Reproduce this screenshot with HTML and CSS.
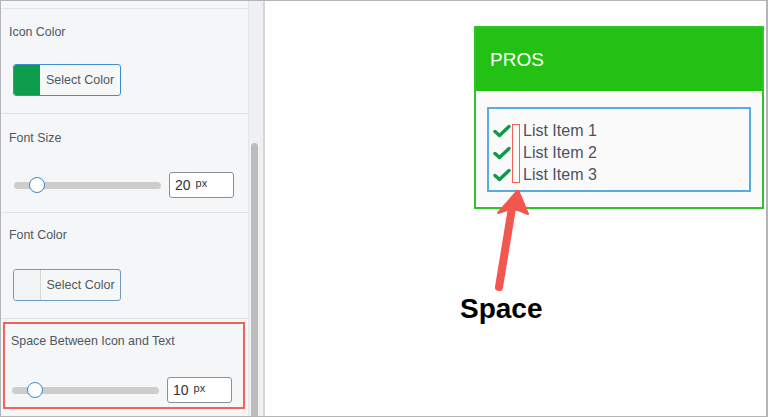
FILE: index.html
```html
<!DOCTYPE html>
<html lang="en">
<head>
    <meta charset="UTF-8">
    <meta name="viewport" content="width=device-width, initial-scale=1.0">
    <title>Pros List Settings</title>
    <link rel="stylesheet" href="styles.css">
</head>
<body>
    <div class="frame">
        <div class="sidebar">
            <div class="panel">
                <div class="section section-top"></div>

                <div class="section section-first">
                    <div class="label">Icon Color</div>
                    <button class="color-btn">
                        <span class="swatch swatch-green"></span>
                        <span class="btn-text">Select Color</span>
                    </button>
                </div>

                <div class="section section-range">
                    <div class="label">Font Size</div>
                    <div class="range-row">
                        <div class="track"><span class="thumb"></span></div>
                        <div class="num-box"><span>20</span><span class="unit">px</span></div>
                    </div>
                </div>

                <div class="section section-third">
                    <div class="label">Font Color</div>
                    <button class="color-btn color-btn-plain">
                        <span class="swatch"></span>
                        <span class="btn-text">Select Color</span>
                    </button>
                </div>

                <div class="section section-last">
                    <div class="highlight">
                        <div class="label">Space Between Icon and Text</div>
                        <div class="range-row">
                            <div class="track"><span class="thumb"></span></div>
                            <div class="num-box"><span>10</span><span class="unit">px</span></div>
                        </div>
                    </div>
                </div>
            </div>
            <div class="scrollbar"><span class="scroll-thumb"></span></div>
        </div>

        <div class="preview">
            <div class="pros-box">
                <div class="pros-head">PROS</div>
                <div class="pros-body">
                    <ul class="pros-list">
                        <li>
                            <svg class="check" viewBox="0 0 18 14"><path d="M2 7.5 L6.5 11.5 L16 2.5" /></svg>
                            List Item 1
                        </li>
                        <li>
                            <svg class="check" viewBox="0 0 18 14"><path d="M2 7.5 L6.5 11.5 L16 2.5" /></svg>
                            List Item 2
                        </li>
                        <li>
                            <svg class="check" viewBox="0 0 18 14"><path d="M2 7.5 L6.5 11.5 L16 2.5" /></svg>
                            List Item 3
                        </li>
                    </ul>
                    <span class="gap-mark"></span>
                </div>
            </div>
        </div>

        <!-- annotation -->
        <svg class="arrow" viewBox="0 0 60 110" width="60" height="110">
            <path class="arrow-shaft" d="M31 18 L18 97" />
            <path class="arrow-head" d="M37 0 L47 24 L37 20 L30 19 L17 23 Z" />
        </svg>
        <div class="note">Space</div>
    </div>
</body>
</html>
```

FILE: styles.css
```css
body {
    margin: 0;
    background-color: #fff;
    font-family: "Liberation Sans", Arial, sans-serif;
}

.frame {
    position: relative;
    display: flex;
    width: 768px;
    height: 417px;
    box-sizing: border-box;
    border: 1px solid #b3b5b8;
    border-right-width: 2px;
    overflow: hidden;
}

/* left settings column */
.sidebar {
    display: flex;
    width: 262px;
    flex-shrink: 0;
    background-color: #f4f6f8;
    border-right: 2px solid #d4d6d9;
}

.panel {
    width: 247px;
    border-right: 1px solid #e3e6e9;
}

.section {
    padding: 13px 12px 17px;
    border-bottom: 1px solid #e0e3e6;
}

.section-top {
    height: 7px;
    padding: 0;
}

.section-first {
    padding-top: 15px;
}

.section-first .label {
    margin-bottom: 24px;
}

.section-range {
    padding-top: 16px;
    padding-bottom: 14px;
}

.section-third {
    padding-top: 14px;
}

.section-last {
    border-bottom: none;
    padding: 3px 3px 0 2px;
}

.label {
    font-size: 12.4px;
    line-height: 16px;
    color: #4f5660;
    margin: 0 0 26px -4px;
}

.color-btn {
    display: flex;
    align-items: stretch;
    width: 108px;
    height: 32px;
    padding: 0;
    background-color: #f6f7f7;
    border: 1px solid #3d8ccc;
    border-radius: 3px;
    overflow: hidden;
    cursor: pointer;
}

.color-btn-plain {
    border-color: #6d9bc0;
}

.swatch {
    width: 26px;
    border-right: 1px solid #d4d6d8;
    background-color: #f2f3f4;
}

.swatch-green {
    background-color: #0e9d4c;
    border-right: none;
}

.btn-text {
    flex: 1;
    align-self: center;
    font-family: "Liberation Sans", Arial, sans-serif;
    font-size: 12.5px;
    color: #50575e;
    text-align: center;
}

.range-row {
    display: flex;
    align-items: center;
}

.track {
    position: relative;
    width: 147px;
    height: 7px;
    border-radius: 4px;
    background-color: #cdcdcd;
    margin-left: 1px;
}

.thumb {
    position: absolute;
    left: 15px;
    top: -5px;
    width: 14px;
    height: 14px;
    border: 1.5px solid #3a86c8;
    border-radius: 50%;
    background-color: #fff;
}

.num-box {
    display: flex;
    align-items: center;
    width: 65px;
    height: 26px;
    margin-left: 8px;
    padding-left: 5px;
    box-sizing: border-box;
    border: 1px solid #8c8f94;
    border-radius: 3px;
    background-color: #fff;
    font-size: 14px;
    color: #2c3338;
}

.num-box .unit {
    font-size: 11px;
    margin: 0 0 5px 5px;
}

.highlight {
    border: 2px solid #f1625a;
    padding: 9px 7px 3px 6px;
}

.highlight .label {
    margin: 0 0 28px 0;
}

.highlight .range-row {
    margin-bottom: 1px;
}

.scrollbar {
    position: relative;
    flex: 1;
    background-color: #eef0f1;
}

.scroll-thumb {
    position: absolute;
    left: 2px;
    top: 142px;
    bottom: 0;
    width: 7px;
    border-radius: 4px 4px 0 0;
    background-color: #bcbcbc;
}

/* right preview */
.preview {
    flex: 1;
    padding: 25px 0 0 209px;
}

.pros-box {
    width: 290px;
    box-sizing: border-box;
    border: 2px solid #2fc428;
    background-color: #fafafa;
}

.pros-head {
    height: 63px;
    padding-left: 14px;
    background-color: #22c114;
    color: #fff;
    font-size: 19px;
    line-height: 63px;
}

.pros-body {
    position: relative;
    padding: 16px 11px 15px 11px;
}

.pros-list {
    margin: 0;
    padding: 11px 4px 4px 4px;
    list-style: none;
    border: 2px solid #58ace0;
}

.pros-list li {
    display: flex;
    align-items: center;
    height: 22px;
    font-size: 16px;
    color: #4b5262;
}

.check {
    width: 18px;
    height: 14px;
    margin-right: 12px;
}

.check path {
    fill: none;
    stroke: #0f9a48;
    stroke-width: 3.4;
    stroke-linecap: round;
    stroke-linejoin: round;
}

.gap-mark {
    position: absolute;
    left: 36px;
    top: 33px;
    width: 6px;
    height: 57px;
    border: 1.5px solid #f1625a;
}

.arrow {
    position: absolute;
    left: 480px;
    top: 189px;
}

.arrow-shaft {
    stroke: #f2564f;
    stroke-width: 8;
    stroke-linecap: round;
    fill: none;
}

.arrow-head {
    fill: #f2564f;
    stroke: #f2564f;
    stroke-width: 2;
    stroke-linejoin: round;
}

.note {
    position: absolute;
    left: 459px;
    top: 292px;
    font-size: 28px;
    line-height: 32px;
    font-weight: bold;
    color: #000;
    text-shadow: 0 0 2px #fff;
}
```
